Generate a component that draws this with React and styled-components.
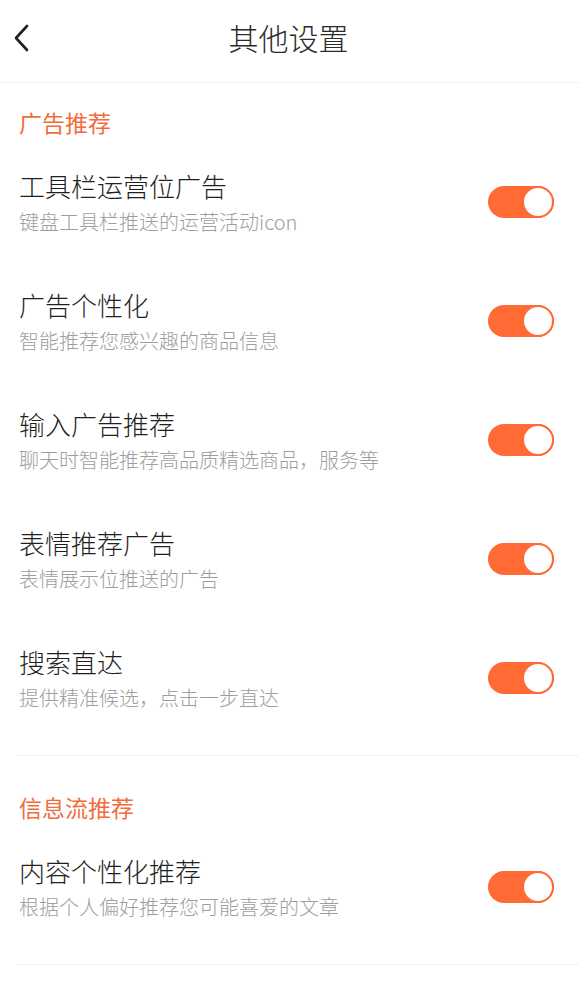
import React, { useState } from 'react';
import styled, { createGlobalStyle } from 'styled-components';

const GlobalStyle = createGlobalStyle`
    body {
        margin: 0;
        background: #ffffff;
        font-family: "Noto Sans CJK SC", "Noto Sans", sans-serif;
    }
`;

const Page = styled.div`
    width: 100%;
    min-height: 100vh;
    background: #ffffff;
`;

const Header = styled.div`
    height: 82px;
    display: flex;
    align-items: center;
    justify-content: center;
    position: relative;
    border-bottom: 1px solid #f1f1f1;
`;

const BackButton = styled.div`
    position: absolute;
    left: 12px;
    top: 23px;
    width: 22px;
    height: 30px;
    display: flex;
    align-items: center;
`;

const HeaderTitle = styled.div`
    font-size: 30px;
    font-weight: 300;
    color: #2b2b2b;
    line-height: 36px;
    margin-top: -9px;
    margin-left: -2px;
`;

const Group = styled.div`
    margin-left: 17px;
    padding-bottom: 18px;
    border-bottom: 1px solid #f1f1f1;
`;

const GroupTitle = styled.div`
    padding-top: ${(p) => p.$top}px;
    padding-bottom: 5px;
    padding-left: 2px;
    font-size: 23px;
    line-height: 30px;
    color: #f26c3b;
`;

const Row = styled.div`
    display: flex;
    align-items: center;
    justify-content: space-between;
    padding: 28px 25px 27px 2px;
`;

const Texts = styled.div`
    display: flex;
    flex-direction: column;
    gap: 8px;
`;

const RowTitle = styled.div`
    font-size: 26px;
    font-weight: 300;
    line-height: 32px;
    color: #1f1f1f;
`;

const RowDesc = styled.div`
    font-size: 20px;
    font-weight: 300;
    line-height: 24px;
    color: #9e9e9e;
`;

const Switch = styled.button`
    width: 66px;
    height: 32px;
    border: none;
    padding: 0;
    border-radius: 16px;
    background: ${(p) => (p.$on ? '#ff6a35' : '#e0e0e0')};
    display: flex;
    align-items: center;
    justify-content: ${(p) => (p.$on ? 'flex-end' : 'flex-start')};
    cursor: pointer;
    flex-shrink: 0;
`;

const Knob = styled.span`
    width: 28px;
    height: 28px;
    border-radius: 50%;
    background: #ffffff;
    border: 2px solid ${(p) => (p.$on ? '#ff6a35' : '#e0e0e0')};
`;

const adItems = [
    { title: '工具栏运营位广告', desc: '键盘工具栏推送的运营活动icon' },
    { title: '广告个性化', desc: '智能推荐您感兴趣的商品信息' },
    { title: '输入广告推荐', desc: '聊天时智能推荐高品质精选商品，服务等' },
    { title: '表情推荐广告', desc: '表情展示位推送的广告' },
    { title: '搜索直达', desc: '提供精准候选，点击一步直达' },
];

const feedItems = [
    { title: '内容个性化推荐', desc: '根据个人偏好推荐您可能喜爱的文章' },
];

function SettingRow({ title, desc }) {
    const [on, setOn] = useState(true);
    return (
        <Row>
            <Texts>
                <RowTitle>{title}</RowTitle>
                <RowDesc>{desc}</RowDesc>
            </Texts>
            <Switch $on={on} onClick={() => setOn(!on)}>
                <Knob $on={on} />
            </Switch>
        </Row>
    );
}

function App() {
    return (
        <Page>
            <GlobalStyle />
            <Header>
                <BackButton>
                    <svg width="18" height="28" viewBox="0 0 18 28" fill="none">
                        <path d="M15 2 L4 14 L15 26" stroke="#222" strokeWidth="2.6" strokeLinecap="round" strokeLinejoin="round" />
                    </svg>
                </BackButton>
                <HeaderTitle>其他设置</HeaderTitle>
            </Header>

            <Group>
                <GroupTitle $top={24}>广告推荐</GroupTitle>
                {adItems.map((item) => (
                    <SettingRow key={item.title} {...item} />
                ))}
            </Group>

            <Group>
                <GroupTitle $top={36}>信息流推荐</GroupTitle>
                {feedItems.map((item) => (
                    <SettingRow key={item.title} {...item} />
                ))}
            </Group>
        </Page>
    );
}

export default App;
